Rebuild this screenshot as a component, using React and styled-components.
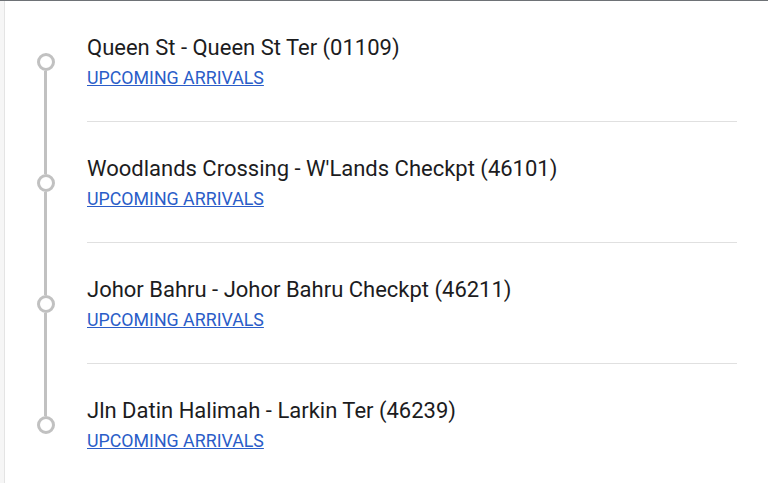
import React from 'react'
import styled, { createGlobalStyle } from 'styled-components'

const GlobalStyle = createGlobalStyle`
  html, body {
    margin: 0;
    padding: 0;
    background: #f6f6f6;
    font-family: Roboto, "Liberation Sans", Arial, sans-serif;
  }
`

const Page = styled.div`
  padding-left: 4px;
  height: 483px;
  overflow: hidden;
  background: #f6f6f6;
  border-top: 1px solid #6e7276;
  box-sizing: border-box;
`

const Panel = styled.div`
  background: #fff;
  border-left: 1px solid #e4e4e4;
  height: 100%;
`

const Stop = styled.div`
  display: flex;
  height: 121px;
`

const Rail = styled.div`
  width: 81px;
  flex-shrink: 0;
  display: flex;
  flex-direction: column;
  align-items: center;
`

const Segment = styled.div`
  flex: 1;
  width: 3px;
  background: ${props => props.$gone ? 'transparent' : '#c1c1c1'};
`

const Dot = styled.div`
  width: 12px;
  height: 12px;
  border: 3px solid #c1c1c1;
  border-radius: 50%;
  background: #fff;
  flex-shrink: 0;
`

const Body = styled.div`
  flex: 1;
  margin-left: 1px;
  margin-right: 31px;
  display: flex;
  flex-direction: column;
  justify-content: center;
  border-bottom: ${props => props.$last ? 'none' : '1px solid #e0e0e0'};
`

const Title = styled.div`
  font-size: 22px;
  color: #1c1c1e;
  line-height: 28px;
`

const Link = styled.a`
  font-size: 17.8px;
  color: #2a5dc8;
  text-decoration: underline;
  line-height: 22px;
  margin-top: 5px;
  align-self: flex-start;
  cursor: pointer;
`

const stops = [
  'Queen St - Queen St Ter (01109)',
  "Woodlands Crossing - W'Lands Checkpt (46101)",
  'Johor Bahru - Johor Bahru Checkpt (46211)',
  'Jln Datin Halimah - Larkin Ter (46239)',
]

const App = () => {
  return (
    <Page>
      <GlobalStyle />
      <Panel>
        {stops.map((name, i) => (
          <Stop key={name}>
            <Rail>
              <Segment $gone={i === 0} />
              <Dot />
              <Segment $gone={i === stops.length - 1} />
            </Rail>
            <Body $last={i === stops.length - 1}>
              <Title>{name}</Title>
              <Link>UPCOMING ARRIVALS</Link>
            </Body>
          </Stop>
        ))}
      </Panel>
    </Page>
  )
}

export default App
